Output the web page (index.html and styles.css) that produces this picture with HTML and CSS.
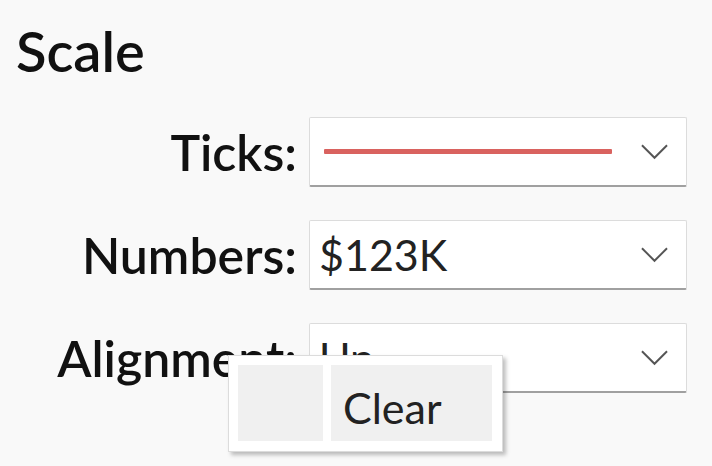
FILE: index.html
```html
<!DOCTYPE html>
<html lang="en">

<head>
  <meta charset="UTF-8">
  <meta name="viewport" content="width=device-width, initial-scale=1">
  <title>Scale settings</title>
  <link rel="stylesheet" href="styles.css">
</head>

<body>
  <section class="panel">
    <h2 class="panel__title">Scale</h2>

    <div class="form">
      <label class="form__label">Ticks:</label>
      <div class="select">
        <span class="select__value"><span class="tick-line"></span></span>
        <svg class="select__arrow" viewBox="0 0 28 16" aria-hidden="true">
          <path d="M1 1 L14 14 L27 1" fill="none" stroke="#555" stroke-width="2" />
        </svg>
      </div>

      <label class="form__label">Numbers:</label>
      <div class="select">
        <span class="select__value">$123K</span>
        <svg class="select__arrow" viewBox="0 0 28 16" aria-hidden="true">
          <path d="M1 1 L14 14 L27 1" fill="none" stroke="#555" stroke-width="2" />
        </svg>
      </div>

      <label class="form__label">Alignment:</label>
      <div class="select">
        <span class="select__value">Up</span>
        <svg class="select__arrow" viewBox="0 0 28 16" aria-hidden="true">
          <path d="M1 1 L14 14 L27 1" fill="none" stroke="#555" stroke-width="2" />
        </svg>
      </div>
    </div>

    <!-- context menu over the alignment row -->
    <div class="menu">
      <div class="menu__icon"></div>
      <div class="menu__item">Clear</div>
    </div>
  </section>
</body>

</html>
```

FILE: styles.css
```css
* {
  box-sizing: border-box;
  padding: 0;
  margin: 0;
}

body {
  font-family: Lato, "Open Sans", sans-serif;
  background-color: #f9f9f9;
  color: #1a1a1a;
}

.panel {
  position: relative;
  padding: 21px 0 0 16px;
  width: 712px;
  height: 466px;
}

.panel__title {
  font-size: 56px;
  font-weight: 600;
  line-height: 60px;
  color: #111;
}

/* label + dropdown rows */
.form {
  display: grid;
  grid-template-columns: 281px 378px;
  column-gap: 12px;
  row-gap: 33px;
  margin-top: 36px;
  align-items: center;
}

.form__label {
  justify-self: end;
  font-size: 50px;
  font-weight: 600;
  color: #111;
}

.select {
  display: flex;
  align-items: center;
  height: 70px;
  background-color: #fff;
  border: 1px solid #dcdcdc;
  border-bottom: 2px solid #a0a0a0;
  border-radius: 2px;
  padding: 0 18px 0 9px;
}

.select__value {
  flex: 1;
  font-size: 43px;
  color: #222;
  display: flex;
  align-items: center;
}

.tick-line {
  display: block;
  width: 288px;
  height: 5px;
  margin-left: 5px;
  background-color: #d9625f;
  border-radius: 1px;
}

.select__arrow {
  width: 27px;
  height: 16px;
}

/* context menu */
.menu {
  position: absolute;
  left: 228px;
  top: 355px;
  width: 275px;
  height: 97px;
  display: flex;
  gap: 8px;
  padding: 9px 10px 10px 9px;
  background-color: #fff;
  border: 1px solid #dcdcdc;
  box-shadow: 3px 3px 4px rgba(0, 0, 0, 0.25);
}

.menu__icon {
  width: 85px;
  background-color: #f0f0f0;
}

.menu__item {
  flex: 1;
  background-color: #f0f0f0;
  font-size: 43px;
  color: #222;
  padding: 13px 0 0 12px;
  line-height: 60px;
}
```
